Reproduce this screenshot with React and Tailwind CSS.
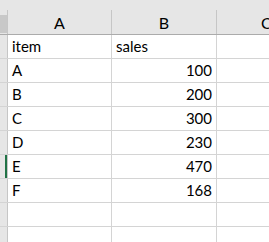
import React from 'react';

const rows = [
    { a: 'item', b: 'sales', text: true },
    { a: 'A', b: '100' },
    { a: 'B', b: '200' },
    { a: 'C', b: '300' },
    { a: 'D', b: '230' },
    { a: 'E', b: '470', active: true },
    { a: 'F', b: '168' },
    { a: '', b: '' },
    { a: '', b: '' },
];

const App = () => {
    return (
        <div className="w-[269px] h-[242px] overflow-hidden bg-white text-[#000] font-['Lato','Liberation_Sans',sans-serif]">
            <div className="h-[10px] bg-[#e6e6e6]" />
            {/* column headers */}
            <div className="flex h-[25px] bg-[#e6e6e6] border-b border-[#ababab] text-[16px] leading-none">
                <div className="w-[8px] shrink-0 border-r border-[#c6c6c6] flex items-end pb-[1px]">
                    <div className="w-[7px] h-[18px] bg-[#c8c8c8]" />
                </div>
                <div className="w-[104px] shrink-0 border-r border-[#c6c6c6] flex items-center justify-center pt-[1px]">A</div>
                <div className="w-[105px] shrink-0 border-r border-[#c6c6c6] flex items-center justify-center pt-[1px]">B</div>
                <div className="flex-1 flex items-center pl-[44px] pt-[1px]">C</div>
            </div>
            {rows.map((r, i) => (
                <div key={i} className="flex h-[24px] border-b border-[#d4d4d4] text-[15px] leading-none">
                    <div
                        className={
                            r.active
                                ? 'w-[8px] shrink-0 bg-[#e6e6e6] border-r border-[#c6c6c6] shadow-[inset_-2px_0_0_#217346]'
                                : 'w-[8px] shrink-0 bg-[#e6e6e6] border-r border-[#c6c6c6]'
                        }
                    />
                    <div className="w-[104px] shrink-0 border-r border-[#d4d4d4] flex items-end pl-[4px] pb-[4px]">{r.a}</div>
                    <div
                        className={
                            r.text
                                ? 'w-[105px] shrink-0 border-r border-[#d4d4d4] flex items-end pl-[4px] pb-[4px]'
                                : 'w-[105px] shrink-0 border-r border-[#d4d4d4] flex items-end justify-end pr-[4px] pb-[4px]'
                        }
                    >
                        {r.b}
                    </div>
                    <div className="flex-1" />
                </div>
            ))}
        </div>
    );
};

export default App;
